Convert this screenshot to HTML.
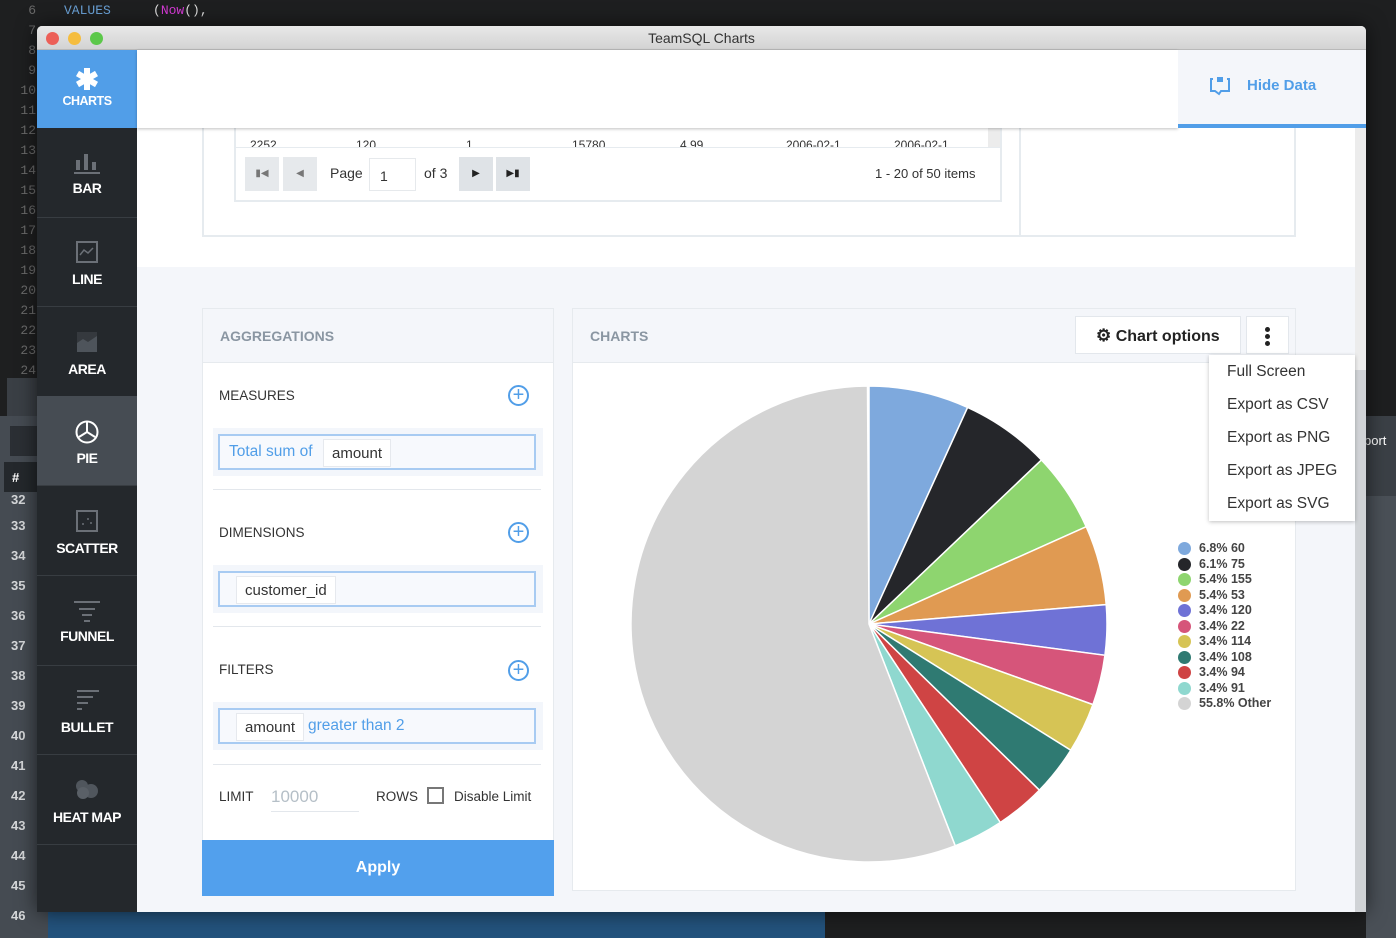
<!DOCTYPE html>
<html><head><meta charset="utf-8"><style>
*{box-sizing:border-box;margin:0;padding:0}
body{width:1396px;height:938px;overflow:hidden;background:#1e1f20;font-family:"Liberation Sans",sans-serif;position:relative}
.abs{position:absolute}
.ln{position:absolute;left:0;width:36px;text-align:right;font-family:"Liberation Mono",monospace;font-size:13px;color:#6b6b6b}
.rn{position:absolute;left:4px;width:30px;height:30px;font-size:13px;font-weight:bold;color:#d6d8da;padding:6px 0 0 7px}
.side{position:absolute;left:37px;width:100px;height:90px;border-bottom:1px solid #383d42;color:#fff;text-align:center;font-size:14px;font-weight:bold;letter-spacing:-.5px}
.side svg{display:block;margin:0 auto}
.lbl{position:absolute;left:219px;font-size:13.5px;color:#333}
.plus{position:absolute;left:508px;width:21px;height:21px;border:2px solid #519ee8;border-radius:50%;color:#519ee8;font-size:20px;line-height:16px;text-align:center}
.field{position:absolute;left:213px;width:330px;height:48px;background:#f3f6fb}
.field .in{position:absolute;left:5px;top:6px;width:318px;height:36px;border:2px solid #a8cbf2;background:#f7f9fd}
.chip{position:absolute;top:3px;height:28px;background:#fff;border:1px solid #e6e9ee;font-size:15px;color:#333;padding:5px 8px}
.sep{position:absolute;left:213px;width:328px;height:1px;background:#e3e7ec}
.dd div{height:33px;padding:8px 0 0 18px;font-size:15.5px;color:#333}
.leg div{height:15.5px;font-size:12.5px;font-weight:bold;color:#444;position:relative;padding-left:21px}
.leg span{position:absolute;left:0;top:1px;width:13px;height:13px;border-radius:50%}
.pg{position:absolute;top:157px;width:34px;height:34px;background:#e6e9ec;font-size:10px;color:#777;text-align:center;line-height:34px}
</style></head><body>
<!-- editor background -->
<div class="ln" style="top:3px">6</div>
<div class="abs" style="left:64px;top:3px;font-family:'Liberation Mono',monospace;font-size:13px;color:#6aa1d6">VALUES</div>
<div class="abs" style="left:153px;top:3px;font-family:'Liberation Mono',monospace;font-size:13px;color:#ddd">(<span style="color:#d63ad6">Now</span>(),</div>
<div class="ln" style="top:23px">7</div><div class="ln" style="top:43px">8</div><div class="ln" style="top:63px">9</div>
<div class="ln" style="top:83px">10</div><div class="ln" style="top:103px">11</div><div class="ln" style="top:123px">12</div>
<div class="ln" style="top:143px">13</div><div class="ln" style="top:163px">14</div><div class="ln" style="top:183px">15</div>
<div class="ln" style="top:203px">16</div><div class="ln" style="top:223px">17</div><div class="ln" style="top:243px">18</div>
<div class="ln" style="top:263px">19</div><div class="ln" style="top:283px">20</div><div class="ln" style="top:303px">21</div>
<div class="ln" style="top:323px">22</div><div class="ln" style="top:343px">23</div><div class="ln" style="top:363px">24</div>
<div class="abs" style="left:7px;top:378px;width:40px;height:38px;background:#3a3f45"></div>
<div class="abs" style="left:0;top:416px;width:48px;height:522px;background:#454b52"></div>
<div class="abs" style="left:10px;top:426px;width:30px;height:30px;border:1px solid #2a2e33;background:#2b2f34"></div>
<div class="abs" style="left:4px;top:462px;width:36px;height:30px;background:#24282c;color:#fff;font-size:13px;font-weight:bold;padding:8px 0 0 8px">#</div>
<div class="rn" style="top:486px">32</div><div class="rn" style="top:512px">33</div><div class="rn" style="top:542px">34</div>
<div class="rn" style="top:572px">35</div><div class="rn" style="top:602px">36</div><div class="rn" style="top:632px">37</div>
<div class="rn" style="top:662px">38</div><div class="rn" style="top:692px">39</div><div class="rn" style="top:722px">40</div>
<div class="rn" style="top:752px">41</div><div class="rn" style="top:782px">42</div><div class="rn" style="top:812px">43</div>
<div class="rn" style="top:842px">44</div><div class="rn" style="top:872px">45</div><div class="rn" style="top:902px">46</div>
<div class="abs" style="left:48px;top:905px;width:777px;height:33px;background:#23527c"></div>
<div class="abs" style="left:1366px;top:416px;width:30px;height:80px;background:#3b4046"></div>
<div class="abs" style="left:1366px;top:496px;width:30px;height:442px;background:#4a5057"></div>
<div class="abs" style="left:1364px;top:433px;color:#fff;font-size:13px">port</div>

<!-- window -->
<div class="abs" style="left:37px;top:26px;width:1329px;height:886px;background:#fff;border-radius:5px 5px 0 0;overflow:hidden;box-shadow:0 0 20px rgba(0,0,0,.6)">
 <div class="abs" style="left:0;top:0;width:1329px;height:24px;background:linear-gradient(#e8e8e8,#d3d3d3);border-bottom:1px solid #b9b9b9;text-align:center;font-size:14px;color:#333;line-height:24px">TeamSQL Charts</div>
 <div class="abs" style="left:9px;top:6px;width:13px;height:13px;border-radius:50%;background:#ec5f57"></div>
 <div class="abs" style="left:31px;top:6px;width:13px;height:13px;border-radius:50%;background:#f5bd3f"></div>
 <div class="abs" style="left:53px;top:6px;width:13px;height:13px;border-radius:50%;background:#5cc84a"></div>
</div>
<!-- sidebar -->
<div class="abs" style="left:37px;top:50px;width:100px;height:862px;background:#24282c"></div>
<div class="side" style="top:50px;height:78px;background:#519ee8;border:none;padding-top:16px;font-size:12.5px">
 <svg width="26" height="26" viewBox="0 0 26 26"><path d="M13 2v22M3.5 7.5l19 11M22.5 7.5l-19 11" stroke="#fff" stroke-width="6"/></svg><div style="margin-top:2px">CHARTS</div></div>
<div class="side" style="top:128px;padding-top:22px"><svg width="28" height="24"><rect x="3" y="10" width="4" height="10" fill="#6b7077"/><rect x="11" y="4" width="4" height="16" fill="#6b7077"/><rect x="19" y="12" width="4" height="8" fill="#6b7077"/><rect x="1" y="22" width="26" height="2" fill="#6b7077"/></svg><div style="margin-top:6px">BAR</div></div>
<div class="side" style="top:217px;padding-top:24px"><svg width="22" height="22"><rect x="1" y="1" width="20" height="20" fill="none" stroke="#6b7077" stroke-width="2"/><path d="M4 14l4-5 4 3 5-5" fill="none" stroke="#6b7077" stroke-width="1.5"/></svg><div style="margin-top:8px">LINE</div></div>
<div class="side" style="top:307px;padding-top:24px"><svg width="22" height="22"><rect x="1" y="1" width="20" height="20" fill="#4e545b"/><path d="M1 12l6-4 5 3 9-6V1H1z" fill="#24282c" opacity=".6"/></svg><div style="margin-top:8px">AREA</div></div>
<div class="side" style="top:396px;background:#464c53;padding-top:24px"><svg width="24" height="24"><circle cx="12" cy="12" r="10.5" fill="none" stroke="#fff" stroke-width="2"/><path d="M12 2v10l8 5M12 12l-8 5" fill="none" stroke="#fff" stroke-width="2"/></svg><div style="margin-top:6px">PIE</div></div>
<div class="side" style="top:486px;padding-top:24px"><svg width="22" height="22"><rect x="1" y="1" width="20" height="20" fill="none" stroke="#6b7077" stroke-width="2"/><circle cx="7" cy="14" r="1" fill="#6b7077"/><circle cx="12" cy="9" r="1" fill="#6b7077"/><circle cx="15" cy="13" r="1" fill="#6b7077"/></svg><div style="margin-top:8px">SCATTER</div></div>
<div class="side" style="top:576px;padding-top:24px"><svg width="28" height="22"><rect x="1" y="1" width="26" height="2" fill="#6b7077"/><rect x="6" y="8" width="16" height="2" fill="#6b7077"/><rect x="9" y="14" width="10" height="2" fill="#6b7077"/><rect x="11" y="20" width="6" height="2" fill="#6b7077"/></svg><div style="margin-top:6px">FUNNEL</div></div>
<div class="side" style="top:665px;padding-top:24px"><svg width="24" height="22"><rect x="2" y="1" width="22" height="2" fill="#6b7077"/><rect x="2" y="7" width="16" height="2" fill="#6b7077"/><rect x="2" y="13" width="11" height="2" fill="#6b7077"/><rect x="2" y="19" width="5" height="2" fill="#6b7077"/></svg><div style="margin-top:8px">BULLET</div></div>
<div class="side" style="top:755px;padding-top:24px"><svg width="26" height="22"><circle cx="8" cy="7" r="6" fill="#50565d"/><circle cx="17" cy="12" r="7" fill="#50565d"/><circle cx="9" cy="14" r="6" fill="#5a6067"/></svg><div style="margin-top:8px">HEAT MAP</div></div>

<!-- main content -->
<div class="abs" style="left:137px;top:128px;width:1218px;height:140px;background:#fff"></div>
<div class="abs" style="left:137px;top:267px;width:1218px;height:645px;background:#f4f6fa"></div>
<div class="abs" style="left:1355px;top:128px;width:11px;height:784px;background:#ececec"></div>
<div class="abs" style="left:1355px;top:370px;width:11px;height:542px;background:#d0d3d6"></div>
<div class="abs" style="left:202px;top:110px;width:1094px;height:127px;border:2px solid #e6ebef;border-top:none"></div>
<div class="abs" style="left:1019px;top:128px;width:2px;height:108px;background:#e6ebef"></div>
<div class="abs" style="left:234px;top:128px;width:768px;height:74px;border:2px solid #e6ebef;border-top:none;background:#fff"></div>
<div class="abs" style="left:236px;top:128px;width:752px;height:19px;font-size:12px;color:#333;overflow:hidden">
 <span class="abs" style="left:14px;top:10px">2252</span><span class="abs" style="left:120px;top:10px">120</span><span class="abs" style="left:230px;top:10px">1</span><span class="abs" style="left:336px;top:10px">15780</span><span class="abs" style="left:444px;top:10px">4.99</span><span class="abs" style="left:550px;top:10px">2006-02-1</span><span class="abs" style="left:658px;top:10px">2006-02-1</span></div>
<div class="abs" style="left:988px;top:128px;width:12px;height:19px;background:#ececec"></div>
<div class="abs" style="left:236px;top:147px;width:764px;height:1px;background:#e6ebef"></div>
<div class="pg" style="left:245px">&#9646;&#9664;</div><div class="pg" style="left:283px">&#9664;</div>
<div class="abs" style="left:330px;top:165px;font-size:14px;color:#333">Page</div>
<div class="abs" style="left:369px;top:158px;width:47px;height:33px;border:1px solid #e6e9ec;font-size:14px;color:#333;padding:9px 0 0 10px">1</div>
<div class="abs" style="left:424px;top:165px;font-size:14px;color:#333">of 3</div>
<div class="pg" style="left:459px;color:#222;background:#dfe3e7">&#9654;</div><div class="pg" style="left:496px;color:#222;background:#dfe3e7">&#9654;&#9646;</div>
<div class="abs" style="left:875px;top:166px;font-size:13px;color:#333">1 - 20 of 50 items</div>

<!-- header -->
<div class="abs" style="left:137px;top:50px;width:1041px;height:78px;background:#fff;box-shadow:0 1px 3px rgba(0,0,0,.25)"></div>
<div class="abs" style="left:1178px;top:50px;width:188px;height:78px;background:#f4f6fa;border-bottom:4px solid #519ee8"></div>
<svg class="abs" style="left:1210px;top:76px" width="20" height="20"><path d="M3 3h-2v12h4l4 3 2-3h8V3h-2" fill="none" stroke="#519ee8" stroke-width="2"/><rect x="7" y="1" width="6" height="5" fill="#519ee8"/></svg>
<div class="abs" style="left:1247px;top:77px;font-size:15px;font-weight:bold;color:#519ee8">Hide Data</div>

<!-- aggregations -->
<div class="abs" style="left:202px;top:308px;width:352px;height:588px;background:#fff;border:1px solid #e6eaee"></div>
<div class="abs" style="left:202px;top:308px;width:352px;height:55px;background:#f4f6fa;border:1px solid #e6eaee;font-size:14px;font-weight:bold;color:#8a96a2;padding:19px 0 0 17px">AGGREGATIONS</div>
<div class="lbl" style="top:388px">MEASURES</div><div class="plus" style="top:385px">+</div>
<div class="field" style="top:428px"><div class="in"><span class="abs" style="left:9px;top:7px;font-size:15.5px;color:#519ee8">Total sum of</span><div class="chip" style="left:103px">amount</div></div></div>
<div class="sep" style="top:489px"></div>
<div class="lbl" style="top:525px">DIMENSIONS</div><div class="plus" style="top:522px">+</div>
<div class="field" style="top:565px"><div class="in"><div class="chip" style="left:16px">customer_id</div></div></div>
<div class="sep" style="top:626px"></div>
<div class="lbl" style="top:662px">FILTERS</div><div class="plus" style="top:660px">+</div>
<div class="field" style="top:702px"><div class="in"><div class="chip" style="left:16px">amount</div><span class="abs" style="left:88px;top:7px;font-size:15.5px;color:#519ee8">greater than 2</span></div></div>
<div class="sep" style="top:764px"></div>
<div class="lbl" style="top:789px">LIMIT</div>
<div class="abs" style="left:271px;top:787px;font-size:17px;color:#b5bfc7">10000</div>
<div class="abs" style="left:271px;top:811px;width:88px;height:1px;background:#e3e7ec"></div>
<div class="lbl" style="top:789px;left:376px">ROWS</div>
<div class="abs" style="left:427px;top:787px;width:17px;height:17px;border:2px solid #777"></div>
<div class="lbl" style="top:789px;left:454px">Disable Limit</div>
<div class="abs" style="left:202px;top:840px;width:352px;height:56px;background:#52a0ed;color:#fff;font-size:16px;font-weight:bold;text-align:center;line-height:56px">Apply</div>

<!-- charts -->
<div class="abs" style="left:572px;top:308px;width:724px;height:583px;background:#fff;border:1px solid #e6eaee"></div>
<div class="abs" style="left:572px;top:308px;width:724px;height:55px;background:#f4f6fa;border:1px solid #e6eaee;font-size:14px;font-weight:bold;color:#8a96a2;padding:19px 0 0 17px">CHARTS</div>
<div class="abs" style="left:1075px;top:316px;width:166px;height:38px;background:#fff;border:1px solid #e3e7ec;font-size:16px;font-weight:bold;color:#222;padding:9px 0 0 20px"><span style="font-size:17px">&#9881;</span> Chart options</div>
<div class="abs" style="left:1246px;top:316px;width:43px;height:38px;background:#fff;border:1px solid #e3e7ec"></div>
<div class="abs" style="left:1265px;top:327px;width:5px;height:5px;border-radius:50%;background:#222;box-shadow:0 7px 0 #222,0 14px 0 #222"></div>
<svg class="abs" style="left:0;top:0" width="1396" height="938" id="pie"></svg>
<div class="leg abs" style="left:1178px;top:541px">
<div><span style="background:#7ea9dd"></span>6.8% 60</div><div><span style="background:#25262a"></span>6.1% 75</div><div><span style="background:#8ed56f"></span>5.4% 155</div><div><span style="background:#e09a52"></span>5.4% 53</div><div><span style="background:#6f72d6"></span>3.4% 120</div><div><span style="background:#d6557a"></span>3.4% 22</div><div><span style="background:#d6c455"></span>3.4% 114</div><div><span style="background:#2f7a72"></span>3.4% 108</div><div><span style="background:#cf4444"></span>3.4% 94</div><div><span style="background:#8fd8cf"></span>3.4% 91</div><div><span style="background:#d4d4d4"></span>55.8% Other</div></div>
<div class="dd abs" style="left:1209px;top:355px;width:146px;height:166px;background:#fff;box-shadow:0 1px 4px rgba(0,0,0,.25);padding-top:0">
<div>Full Screen</div><div>Export as CSV</div><div>Export as PNG</div><div>Export as JPEG</div><div>Export as SVG</div></div>
<script>
var v=[6.8,6.1,5.4,5.4,3.4,3.4,3.4,3.4,3.4,3.4,55.8],c=["#7ea9dd","#25262a","#8ed56f","#e09a52","#6f72d6","#d6557a","#d6c455","#2f7a72","#cf4444","#8fd8cf","#d4d4d4"];
var cx=869,cy=624,r=238,a=0,s="";
for(var i=0;i<v.length;i++){var a0=a*3.6*Math.PI/180;a+=v[i];var a1=a*3.6*Math.PI/180;
var x0=cx+r*Math.sin(a0),y0=cy-r*Math.cos(a0),x1=cx+r*Math.sin(a1),y1=cy-r*Math.cos(a1);
s+='<path d="M'+cx+' '+cy+'L'+x0+' '+y0+'A'+r+' '+r+' 0 '+(v[i]>50?1:0)+' 1 '+x1+' '+y1+'Z" fill="'+c[i]+'" stroke="#fff" stroke-width="1.5"/>';}
document.getElementById("pie").innerHTML=s;
</script>
</body></html>
